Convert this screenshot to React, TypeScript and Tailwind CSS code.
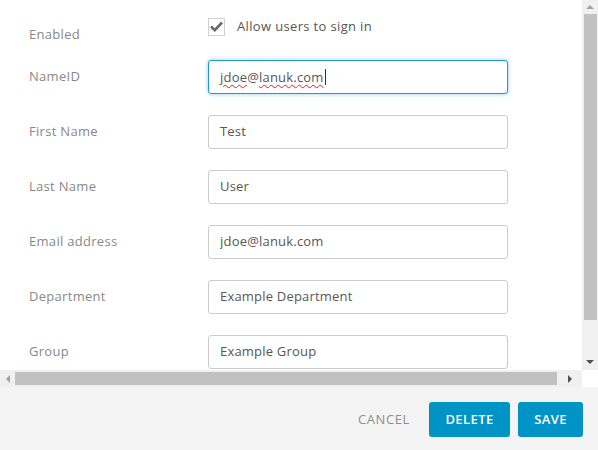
import { useState } from 'react';

const FONT = { fontFamily: '"Open Sans", "Noto Sans", sans-serif' };

const fields = [
  { label: 'NameID', value: 'jdoe@lanuk.com', focused: true },
  { label: 'First Name', value: 'Test' },
  { label: 'Last Name', value: 'User' },
  { label: 'Email address', value: 'jdoe@lanuk.com' },
  { label: 'Department', value: 'Example Department' },
  { label: 'Group', value: 'Example Group' },
];

function Arrow({ dir }: { dir: 'up' | 'down' | 'left' | 'right' }) {
  const cls = {
    up: 'border-x-[4px] border-x-transparent border-b-[4px] border-b-[#a3a3a3]',
    down: 'border-x-[4px] border-x-transparent border-t-[4px] border-t-[#505050]',
    left: 'border-y-[4px] border-y-transparent border-r-[4px] border-r-[#a3a3a3]',
    right: 'border-y-[4px] border-y-transparent border-l-[4px] border-l-[#505050]',
  }[dir];
  return <span className={`block h-0 w-0 ${cls}`} />;
}

function Field({ label, value, focused }: { label: string; value: string; focused?: boolean }) {
  const [v, setV] = useState(value);
  return (
    <div className="flex h-[55px] items-start">
      <div className="w-[208px] pl-[29px] pt-[7px] text-[13px] tracking-[0.3px] text-[#888888]">{label}</div>
      <div
        className={
          'flex h-[34px] w-[300px] items-center rounded-[3px] border bg-white px-[11px] text-[13px] tracking-[0.2px] text-[#565656] ' +
          (focused
            ? 'border-[#1a9ad6] shadow-[0_0_4px_rgba(0,148,210,0.45)]'
            : 'border-[#cccccc]')
        }
      >
        {focused ? (
          <span className="relative">
            <span className="underline decoration-wavy decoration-[#e02020] decoration-1 underline-offset-2">jdoe</span>
            @
            <span className="underline decoration-wavy decoration-[#e02020] decoration-1 underline-offset-2">lanuk.com</span>
            <span className="ml-px inline-block h-[16px] w-px translate-y-[3px] bg-[#333]" />
          </span>
        ) : (
          <input
            className="w-full bg-transparent tracking-[0.2px] outline-none"
            value={v}
            onChange={(e) => setV(e.target.value)}
          />
        )}
      </div>
    </div>
  );
}

export default function App() {
  return (
    <div className="flex h-[450px] w-[598px] flex-col bg-white" style={FONT}>
      {/* scroll area */}
      <div className="flex h-[370px]">
        <div className="flex-1 overflow-hidden">
          <div className="flex h-[60px] items-start">
            <div className="w-[208px] pl-[29px] pt-[25px] text-[13px] tracking-[0.3px] text-[#888888]">Enabled</div>
            <label className="flex items-center gap-[12px] pt-[17px] text-[13px] tracking-[0.35px] text-[#565656]">
              <span className="flex h-[18px] w-[17px] items-center justify-center border border-[#d0d0d0] bg-white">
                <svg width="13" height="11" viewBox="0 0 13 11">
                  <path d="M1 5.5 L4.8 9.2 L12 1.5" fill="none" stroke="#6a6a6a" strokeWidth="2.6" />
                </svg>
              </span>
              Allow users to sign in
            </label>
          </div>
          {fields.map((f) => (
            <Field key={f.label} {...f} />
          ))}
        </div>
        {/* vertical scrollbar */}
        <div className="flex w-[16px] flex-col items-center bg-[#f0f0f0]">
          <div className="flex h-[14px] items-center justify-center">
            <Arrow dir="up" />
          </div>
          <div className="h-[306px] w-[13px] bg-[#c1c1c1]" />
          <div className="flex-1" />
          <div className="flex h-[17px] items-center justify-center">
            <Arrow dir="down" />
          </div>
        </div>
      </div>
      {/* horizontal scrollbar */}
      <div className="flex h-[17px]">
        <div className="flex flex-1 items-center bg-[#f0f0f0]">
          <div className="flex w-[15px] justify-center">
            <Arrow dir="left" />
          </div>
          <div className="h-[13px] w-[542px] bg-[#c1c1c1]" />
          <div className="flex flex-1 justify-center">
            <Arrow dir="right" />
          </div>
        </div>
        <div className="w-[16px] bg-white" />
      </div>
      {/* footer */}
      <div className="flex flex-1 items-start justify-end bg-[#f4f4f4] pr-[15px] pt-[15px]">
        <button className="mr-[19px] h-[35px] px-0 text-[13px] tracking-[0.6px] text-[#8f8f8f]">CANCEL</button>
        <button className="mr-[8px] h-[35px] w-[81px] rounded-[3px] bg-[#0094c6] text-[13px] font-semibold tracking-[0.4px] text-white">
          DELETE
        </button>
        <button className="h-[35px] w-[65px] rounded-[3px] bg-[#0094c6] text-[13px] font-semibold tracking-[0.4px] text-white">
          SAVE
        </button>
      </div>
    </div>
  );
}
